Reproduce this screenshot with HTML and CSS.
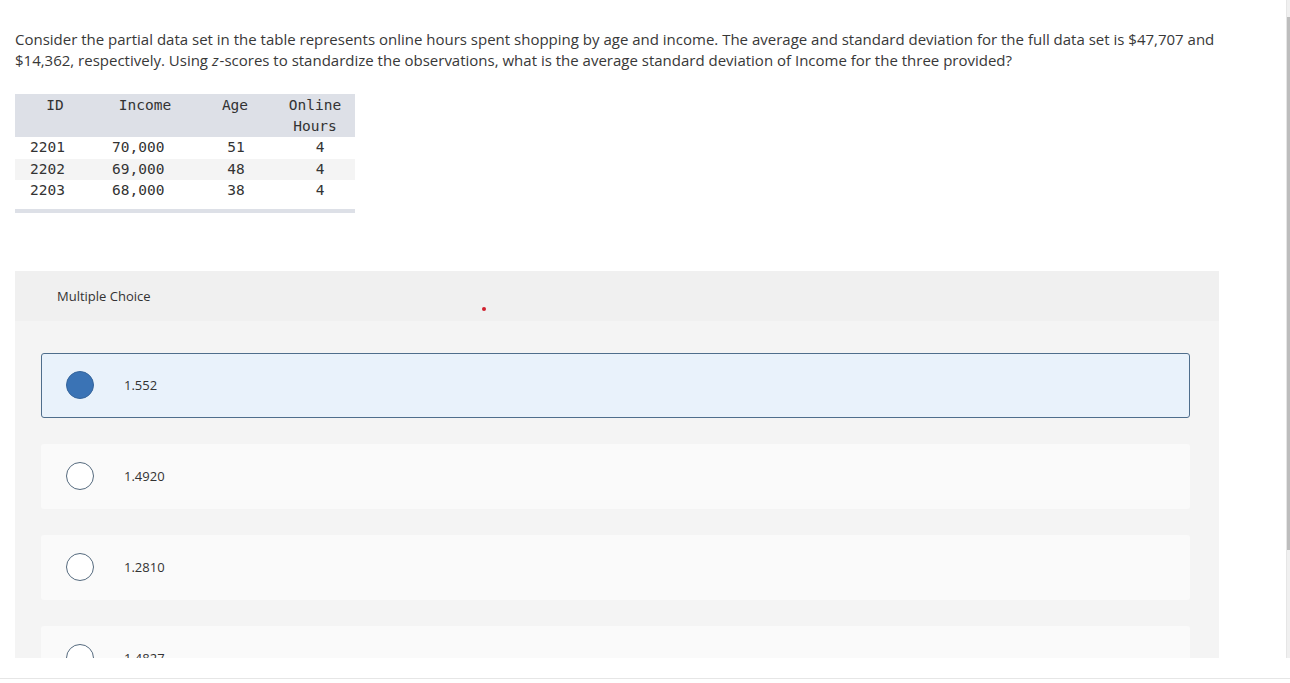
FILE: index.html
```html
<!DOCTYPE html>
<html>
<head>
<meta charset="utf-8">
<link rel="stylesheet" href="styles.css">
</head>
<body>
<div class="viewport">
  <div class="content">
    <p class="question">Consider the partial data set in the table represents online hours spent shopping by age and income. The average and standard deviation for the full data set is $47,707 and $14,362, respectively. Using <i>z</i>-scores to standardize the observations, what is the average standard deviation of Income for the three provided?</p>
    <table class="data">
      <colgroup><col class="w80"><col class="w100"><col class="w80"><col class="w80"></colgroup>
      <thead>
        <tr><th>ID</th><th>Income</th><th>Age</th><th>Online<br>Hours</th></tr>
      </thead>
      <tbody>
        <tr><td class="c-id">2201</td><td class="c-inc">70,000</td><td class="c-age">51</td><td class="c-hrs">4</td></tr>
        <tr class="alt"><td class="c-id">2202</td><td class="c-inc">69,000</td><td class="c-age">48</td><td class="c-hrs">4</td></tr>
        <tr><td class="c-id">2203</td><td class="c-inc">68,000</td><td class="c-age">38</td><td class="c-hrs">4</td></tr>
        <tr class="spacer"><td colspan="4"></td></tr>
      </tbody>
    </table>
    <div class="panel">
      <div class="panel-head">
        <span>Multiple Choice</span>
        <span class="dot"></span>
      </div>
      <div class="panel-body">
        <div class="option selected"><span class="radio"></span><span class="label">1.552</span></div>
        <div class="option"><span class="radio"></span><span class="label">1.4920</span></div>
        <div class="option"><span class="radio"></span><span class="label">1.2810</span></div>
        <div class="option"><span class="radio"></span><span class="label">1.4827</span></div>
      </div>
    </div>
  </div>
  <div class="scrollbar"><div class="thumb"></div></div>
</div>
<div class="footer-line"></div>
</body>
</html>
```
FILE: styles.css
```css
html, body {
  margin: 0;
  padding: 0;
  background: #ffffff;
}
body {
  font-family: "Open Sans", "Lato", sans-serif;
  color: #383838;
  width: 1290px;
  height: 683px;
  overflow: hidden;
}
.viewport {
  position: relative;
  height: 658px;
  overflow: hidden;
}
.content {
  padding: 29px 0 0 15px;
  width: 1204px;
}
.question {
  margin: 0;
  font-size: 15px;
  line-height: 21px;
  width: 1208px;
  color: #383838;
}
.question i {
  padding-right: 1px;
}
.data {
  margin-top: 23px;
  border-collapse: collapse;
  table-layout: fixed;
  font-family: "DejaVu Sans Mono", "Liberation Mono", monospace;
  font-size: 14.5px;
  color: #333;
  width: 340px;
}
.w80 { width: 80px; }
.w100 { width: 100px; }
.data thead tr {
  background: #dde0e7;
}
.data th {
  font-weight: normal;
  line-height: 21px;
  padding: 1px 0 0;
  vertical-align: top;
  text-align: center;
}
.data td {
  line-height: 21.5px;
  height: 21px;
  padding: 0;
  white-space: nowrap;
}
.data tr.alt {
  background: #f4f4f4;
}
.data tr.spacer td {
  height: 7px;
  border-bottom: 4px solid #dde0e7;
  line-height: 0;
}
td.c-id { padding-left: 15px; text-align: left; }
td.c-inc { padding-left: 17px; text-align: left; }
td.c-age { text-align: center; padding-left: 2px; }
td.c-hrs { text-align: center; padding-left: 10px; }

.panel {
  margin-top: 58px;
  width: 1204px;
  background: #f4f4f4;
}
.panel-head {
  position: relative;
  height: 50px;
  background: #f0f0f0;
  display: flex;
  align-items: center;
  padding-left: 42px;
  font-size: 13px;
  color: #333;
}
.dot {
  position: absolute;
  left: 467px;
  top: 36px;
  width: 4px;
  height: 4px;
  border-radius: 50%;
  background: #d0202e;
}
.panel-body {
  padding: 32px 29px 30px 26px;
  display: flex;
  flex-direction: column;
  gap: 26px;
}
.option {
  height: 65px;
  box-sizing: border-box;
  background: #fafafa;
  border-radius: 3px;
  display: flex;
  align-items: center;
  padding-left: 25px;
  font-size: 13px;
  color: #333;
}
.option.selected {
  background: #e9f2fb;
  border: 1px solid #4f6e8c;
  padding-left: 24px;
}
.radio {
  width: 28px;
  height: 28px;
  box-sizing: border-box;
  border-radius: 50%;
  border: 1.5px solid #556a7e;
  background: #ffffff;
  flex: none;
}
.selected .radio {
  background: #3a73b5;
  border-color: #35659c;
}
.label {
  margin-left: 30px;
}
.scrollbar {
  position: absolute;
  top: 0;
  right: 0;
  width: 3px;
  height: 658px;
  background: #f0f0f0;
  border-left: 1px solid #e6e6e6;
}
.thumb {
  margin-top: 17px;
  height: 533px;
  background: #bdbdbd;
}
.footer-line {
  margin-top: 20px;
  height: 1px;
  background: #e6e6e6;
}
```
